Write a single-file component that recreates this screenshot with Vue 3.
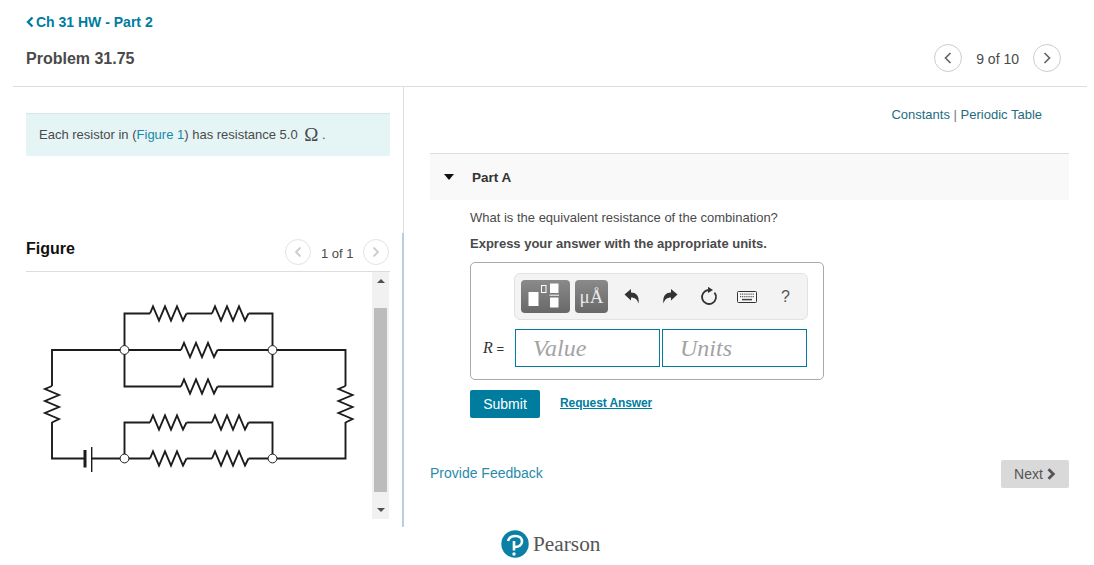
<script setup>
function zig(x, y, vertical) {
  const seq = [[3, -7], [9, 7], [15, -7], [21, 7], [27, -7], [33, 7], [36.5, 0]]
  const pts = seq.map(([d, a]) => (vertical ? `${x + a} ${y + d}` : `${x + d} ${y + a}`))
  return `M${x} ${y} L` + pts.join(' L')
}
const wires = [
  'M124.5 350 V313.5 H150', 'M186.5 313.5 H212', 'M248.5 313.5 H272.5 V350',
  'M52 386 V350 H181', 'M217.5 350 H345.5 V386',
  'M124.5 350 V386.5 H181', 'M217.5 386.5 H272.5 V350',
  'M52 422 V458.5 H84', 'M92 458.5 H150', 'M186.5 458.5 H212', 'M248.5 458.5 H345.5 V422',
  'M124.5 458.5 V422.5 H150', 'M186.5 422.5 H212', 'M248.5 422.5 H272.5 V458.5'
]
const resistors = [
  [150, 313.5], [212, 313.5], [181, 350], [181, 386.5],
  [150, 422.5], [212, 422.5], [150, 458.5], [212, 458.5]
].map(([x, y]) => zig(x, y, false))
const verticals = [[52, 386], [345.5, 386]].map(([x, y]) => zig(x, y, true))
const nodes = [[124.5, 350], [272.5, 350], [124.5, 458.5], [272.5, 458.5]]
</script>

<template>
  <div class="page">
    <header class="top">
      <a class="crumb">
        <svg width="8" height="12" viewBox="0 0 8 12"><path d="M6.5 1.5 L2 6 L6.5 10.5" fill="none" stroke="currentColor" stroke-width="2.4" /></svg>
        <span>Ch 31 HW - Part 2</span>
      </a>
      <div class="title-row">
        <h1>Problem 31.75</h1>
        <div class="pager">
          <span class="circle"><svg width="10" height="14" viewBox="0 0 10 14"><path d="M7.5 2 L2.5 7 L7.5 12" fill="none" stroke="#666" stroke-width="1.7" /></svg></span>
          <span class="count">9 of 10</span>
          <span class="circle"><svg width="10" height="14" viewBox="0 0 10 14"><path d="M2.5 2 L7.5 7 L2.5 12" fill="none" stroke="#666" stroke-width="1.7" /></svg></span>
        </div>
      </div>
    </header>

    <main class="main">
      <section class="left">
        <div class="info">Each resistor in (<a class="fig-link">Figure 1</a>) has resistance 5.0 <span class="omega">Ω</span> .</div>
        <div class="fig-head">
          <h2>Figure</h2>
          <div class="pager small">
            <span class="circle"><svg width="10" height="14" viewBox="0 0 10 14"><path d="M7.5 2.5 L3 7 L7.5 11.5" fill="none" stroke="#ccc" stroke-width="1.8" /></svg></span>
            <span class="count">1 of 1</span>
            <span class="circle"><svg width="10" height="14" viewBox="0 0 10 14"><path d="M2.5 2.5 L7 7 L2.5 11.5" fill="none" stroke="#ccc" stroke-width="1.8" /></svg></span>
          </div>
        </div>
        <div class="fig-body">
          <svg class="circuit" width="346" height="248" viewBox="26 272 346 248">
            <g fill="none" stroke="#1c1c1c" stroke-width="1.9">
              <path v-for="(d, i) in wires" :key="'w' + i" :d="d" />
              <path v-for="(d, i) in resistors" :key="'r' + i" :d="d" />
              <path v-for="(d, i) in verticals" :key="'v' + i" :d="d" />
            </g>
            <rect x="83.5" y="450" width="3" height="17.5" fill="#1c1c1c" />
            <rect x="91" y="447" width="1.4" height="25" fill="#1c1c1c" />
            <circle v-for="(n, i) in nodes" :key="'n' + i" :cx="n[0]" :cy="n[1]" r="4.4" fill="#fff" stroke="#1c1c1c" stroke-width="1" />
          </svg>
          <div class="scroll">
            <span class="arrow up"></span>
            <span class="thumb"></span>
            <span class="arrow down"></span>
          </div>
        </div>
      </section>

      <div class="rail"><span class="rail-a"></span><span class="rail-b"></span></div>

      <section class="right">
        <div class="refs"><a>Constants</a> <span class="sep">|</span> <a>Periodic Table</a></div>
        <div class="part-bar"><span class="tri"></span><strong>Part A</strong></div>
        <div class="part-body">
          <p class="q">What is the equivalent resistance of the combination?</p>
          <p class="ex">Express your answer with the appropriate units.</p>
          <div class="answer">
            <div class="toolbar">
              <span class="tbtn wide">
                <svg width="49" height="33" viewBox="521 280 49 33">
                  <rect x="528.5" y="292" width="10" height="14" fill="#fff" />
                  <rect x="541.5" y="285.5" width="4.5" height="7" fill="none" stroke="#fff" />
                  <rect x="550" y="283.5" width="8.5" height="9.5" fill="#fff" />
                  <rect x="549.5" y="294.7" width="9.5" height="1" fill="#fff" />
                  <rect x="550" y="297.5" width="8.5" height="10" fill="#fff" />
                </svg>
              </span>
              <span class="tbtn mu">μÅ</span>
              <span class="slot first">
                <svg width="16" height="17" viewBox="0 0 16 17"><path d="M0.5 6.5 L7 1 V4.4 C12 4.4 15.5 7.6 14.6 15.5 C13.4 11.4 11 9.4 7 9.4 V12.5 Z" fill="#333" /></svg>
              </span>
              <span class="slot">
                <svg width="16" height="17" viewBox="0 0 16 17"><path d="M15.5 6.5 L9 1 V4.4 C4 4.4 0.5 7.6 1.4 15.5 C2.6 11.4 5 9.4 9 9.4 V12.5 Z" fill="#333" /></svg>
              </span>
              <span class="slot">
                <svg width="18" height="20" viewBox="700 287 18 20"><path d="M708.5 290 A7 7 0 1 0 714.5 292.6" fill="none" stroke="#333" stroke-width="1.8" /><path d="M708 286.8 L713 289.9 L708 293 Z" fill="#333" /></svg>
              </span>
              <span class="slot">
                <svg width="20" height="12" viewBox="0 0 20 12"><rect x="0.5" y="0.5" width="19" height="11" rx="1" fill="#f8f8f8" stroke="#333" /><path d="M3 3.2 H17 M3 5.6 H17" stroke="#555" stroke-width="1.2" stroke-dasharray="1.2 0.9" /><path d="M5 8.6 H15" stroke="#444" stroke-width="1.5" /></svg>
              </span>
              <span class="slot help">?</span>
            </div>
            <div class="inputs">
              <span class="lbl"><i>R</i> =</span>
              <span class="field">Value</span>
              <span class="field second">Units</span>
            </div>
          </div>
          <div class="actions">
            <button class="submit">Submit</button>
            <a class="request">Request Answer</a>
          </div>
        </div>
        <div class="foot">
          <a class="feedback">Provide Feedback</a>
          <span class="next">Next
            <svg width="10" height="12" viewBox="0 0 10 12"><path d="M2.5 1.2 L7.3 6 L2.5 10.8" fill="none" stroke="#555" stroke-width="2.8" /></svg>
          </span>
        </div>
        <div class="pearson">
          <svg width="28" height="28" viewBox="0 0 28 28">
            <circle cx="14" cy="14" r="13.7" fill="#0a80a6" />
            <path d="M7 11 C8 7.5 11 6 14.5 6 C18.5 6 21 8.3 21 11.5 C21 14.8 18 17 14 17 M13 11 V20.5" fill="none" stroke="#fff" stroke-width="2.6" />
            <circle cx="13" cy="24" r="1.7" fill="#fff" />
          </svg>
          <span>Pearson</span>
        </div>
      </section>
    </main>
  </div>
</template>

<style>
html, body { margin: 0; background: #fff; overflow: hidden; }
</style>

<style scoped>
.page {
  width: 1094px;
  height: 565px;
  overflow: hidden;
  font-family: "Liberation Sans", Arial, sans-serif;
  color: #4a4a4a;
}
a { cursor: pointer; }
p, h1, h2 { margin: 0; }

.top {
  margin: 0 7px 0 13px;
  padding: 14px 13px 0;
  height: 72px;
  border-bottom: 1px solid #ddd;
}
.crumb {
  display: flex;
  align-items: center;
  gap: 2px;
  height: 16px;
  color: #007c9f;
  font-size: 14px;
  font-weight: 700;
}
.title-row {
  display: flex;
  justify-content: space-between;
  align-items: center;
  margin-top: 14px;
  padding-right: 13px;
  height: 28px;
}
h1 { font-size: 16px; font-weight: 700; color: #4a4a4a; margin-top: 2px; }
.pager { display: flex; align-items: center; gap: 14px; }
.circle {
  width: 26px;
  height: 26px;
  border: 1px solid #ccc;
  border-radius: 50%;
  display: flex;
  align-items: center;
  justify-content: center;
  background: #fff;
}
.count { font-size: 14px; color: #4a4a4a; margin-top: 2px; }

.main { display: flex; }
.left {
  margin-left: 13px;
  padding-left: 13px;
  padding-top: 26px;
  width: 364px;
  flex: none;
}
.info {
  height: 42px;
  line-height: 41px;
  border-top: 1px solid #d6e6e8;
  background: #e5f5f6;
  padding-left: 13px;
  font-size: 13px;
  color: #4a4a4a;
}
.fig-link { color: #1b87a6; }
.omega {
  font-family: "Liberation Serif", serif;
  font-size: 19px;
  margin-left: 3px;
  line-height: 1;
  vertical-align: -2px;
}
.fig-head {
  margin-top: 83px;
  height: 32px;
  display: flex;
  justify-content: space-between;
  align-items: flex-start;
  border-bottom: 1px solid #ddd;
}
h2 { font-size: 16px; font-weight: 700; color: #111; margin-top: 1px; line-height: 18px; }
.small { gap: 9.5px; margin-right: 1px; }
.small .circle { width: 24px; height: 24px; border-color: #e3e3e3; }
.small .count { font-size: 13px; }
.fig-body { display: flex; justify-content: space-between; padding-right: 1px; }
.circuit { display: block; }
.scroll {
  width: 17px;
  height: 247px;
  background: #f1f1f1;
  display: flex;
  flex-direction: column;
  align-items: center;
  padding: 7px 0;
  box-sizing: border-box;
}
.arrow { width: 0; height: 0; border-left: 4px solid transparent; border-right: 4px solid transparent; }
.up { border-bottom: 4px solid #505050; }
.down { border-top: 4px solid #505050; margin-top: auto; }
.thumb { width: 13px; height: 184px; background: #bcbcbc; margin-top: 25px; }

.rail {
  margin-left: 12px;
  width: 2px;
  flex: none;
  display: flex;
  flex-direction: column;
  align-items: flex-end;
}
.rail-a { width: 1px; height: 146px; background: #ddd; }
.rail-b { width: 2px; height: 294px; background: #b9cfe0; }

.right { width: 639px; margin-left: 26px; flex: none; }
.refs {
  margin-top: 18px;
  height: 19px;
  line-height: 19px;
  text-align: right;
  padding-right: 27px;
  font-size: 13px;
  color: #256c82;
}
.sep { color: #777; }
.part-bar {
  margin-top: 29px;
  height: 46px;
  border-top: 1px solid #ddd;
  background: #f9f9f9;
  display: flex;
  align-items: center;
  padding-left: 14px;
  font-size: 13.5px;
  color: #333;
}
.tri {
  width: 0;
  height: 0;
  border-left: 5.5px solid transparent;
  border-right: 5.5px solid transparent;
  border-top: 6px solid #111;
  margin-right: 18px;
}
.part-body { padding-left: 40px; }
.q { margin-top: 9px; font-size: 13px; line-height: 17px; color: #4a4a4a; }
.ex { margin-top: 9px; font-size: 13px; line-height: 17px; font-weight: 700; color: #4a4a4a; }
.answer {
  margin-top: 10px;
  width: 354px;
  height: 118px;
  box-sizing: border-box;
  border: 1px solid #aaa;
  border-radius: 5px;
  padding: 10px 0 0 12px;
}
.toolbar {
  margin-left: 31px;
  width: 294px;
  height: 47px;
  box-sizing: border-box;
  border: 1px solid #e2e2e2;
  border-radius: 6px;
  background: #f3f3f3;
  display: flex;
  align-items: center;
  padding-left: 6px;
}
.tbtn {
  height: 33px;
  border-radius: 4px;
  background: linear-gradient(#8a8a8a, #686868);
  display: flex;
  align-items: center;
  justify-content: center;
  color: #e8e8e8;
}
.wide { width: 49px; }
.mu {
  width: 33px;
  margin-left: 5px;
  font-family: "Liberation Serif", serif;
  font-size: 19px;
}
.slot { width: 38.3px; display: flex; align-items: center; justify-content: center; flex: none; }
.first { margin-left: 5px; }
.help { font-size: 16px; color: #555; }
.inputs { display: flex; align-items: center; margin-top: 9px; }
.lbl { width: 32px; flex: none; font-size: 13px; color: #333; white-space: nowrap; }
.lbl i { font-family: "Liberation Serif", serif; font-size: 16px; }
.field {
  width: 145px;
  height: 38px;
  box-sizing: border-box;
  border: 1px solid #007c9f;
  display: flex;
  align-items: center;
  padding-left: 17px;
  font-family: "Liberation Serif", serif;
  font-style: italic;
  font-size: 24px;
  color: #a3a3a3;
}
.second { margin-left: 2px; }
.actions { display: flex; align-items: center; margin-top: 10px; }
.submit {
  width: 70px;
  height: 28px;
  border: 0;
  border-radius: 2px;
  background: #007c9f;
  color: #fff;
  font: 14px "Liberation Sans", Arial, sans-serif;
  padding: 0;
}
.request {
  margin-left: 20px;
  margin-top: -2px;
  font-size: 12px;
  font-weight: 700;
  letter-spacing: -0.1px;
  color: #007c9f;
  text-decoration: underline;
}
.foot {
  margin-top: 42px;
  height: 28px;
  display: flex;
  justify-content: space-between;
  align-items: center;
  font-size: 14px;
}
.feedback { color: #2a8bab; margin-top: -2px; }
.next {
  width: 68px;
  height: 28px;
  background: #d9d9d9;
  border-radius: 2px;
  display: flex;
  align-items: center;
  justify-content: center;
  gap: 3px;
  color: #555;
}
.pearson {
  margin: 42px 0 0 71px;
  display: flex;
  align-items: center;
  gap: 4px;
  font-family: "Liberation Serif", serif;
  font-size: 21.3px;
  color: #555;
}
</style>
